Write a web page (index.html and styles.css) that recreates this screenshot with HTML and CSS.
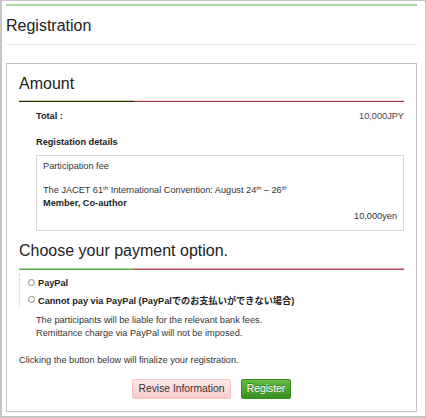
FILE: index.html
```html
<!DOCTYPE html>
<html lang="en">
<head>
<meta charset="utf-8">
<title>Registration</title>
<link rel="stylesheet" href="styles.css">
</head>
<body>
<div class="page">
  <div class="topbar"></div>
  <h1 class="page-title">Registration</h1>
  <section class="panel">
    <h2 class="sec-title">Amount</h2>
    <div class="rule rule-dark"><span class="rule-left"></span></div>
    <div class="total-row"><b>Total :</b><span class="total-val">10,000JPY</span></div>
    <div class="details-title">Registation details</div>
    <div class="details-box">
      <p class="d-line">Participation fee</p>
      <p class="d-line d-gap">The JACET 61<sup>th</sup> International Convention: August 24<sup>th</sup> – 26<sup>th</sup></p>
      <p class="d-line"><b>Member, Co-author</b></p>
      <p class="d-line d-price">10,000yen</p>
    </div>
    <h2 class="sec-title pay-title">Choose your payment option.</h2>
    <div class="rule rule-green"><span class="rule-left"></span></div>
    <div class="options">
      <label class="opt"><span class="radio"></span><b>PayPal</b></label>
      <label class="opt"><span class="radio"></span><b>Cannot pay via PayPal (PayPalでのお支払いができない場合)</b></label>
    </div>
    <p class="note">The participants will be liable for the relevant bank fees.<br>Remittance charge via PayPal will not be imposed.</p>
    <p class="final">Clicking the button below will finalize your registration.</p>
    <div class="buttons">
      <button class="btn btn-revise" type="button">Revise Information</button>
      <button class="btn btn-register" type="button">Register</button>
    </div>
  </section>
</div>
</body>
</html>
```

FILE: styles.css
```css
html, body {
  margin: 0;
  padding: 0;
  background: #ffffff;
}
body {
  font-family: "Liberation Sans", Arial, "Noto Sans CJK JP", sans-serif;
  color: #333333;
}
.page {
  box-sizing: border-box;
  width: 426px;
  height: 418px;
  border-style: solid;
  border-color: #c6c6c6;
  border-width: 1px 1px 2px 2px;
  padding: 3px 8px 0 4px;
  overflow: hidden;
}
.topbar {
  height: 2px;
  background: #a9d9a1;
}
.page-title {
  margin: 10px 0 0;
  padding-bottom: 8px;
  border-bottom: 1px solid #e6e6e6;
  font-size: 16px;
  line-height: 20px;
  font-weight: normal;
  color: #222222;
}
.panel {
  margin-top: 18px;
  border: 1px solid #c4c4c4;
  padding: 10px 12px 12px;
}
.sec-title {
  margin: 0;
  font-size: 16px;
  line-height: 20px;
  font-weight: normal;
  color: #222222;
}
.rule {
  height: 2px;
  margin-top: 6px;
}
.rule-dark {
  background: linear-gradient(to bottom, #ecd0d4 0 50%, #a43a48 50% 100%);
}
.rule-dark .rule-left {
  display: block;
  width: 115px;
  height: 2px;
  background: linear-gradient(to bottom, #b5dcaa 0 50%, #3b1d0c 50% 100%);
}
.rule-green {
  margin-top: 7px;
  background: linear-gradient(to bottom, #d6a0a7 0 50%, #b4505d 50% 100%);
}
.rule-green .rule-left {
  display: block;
  width: 115px;
  height: 2px;
  background: linear-gradient(to bottom, #a2d596 0 50%, #5cb54a 50% 100%);
}
.total-row {
  display: flex;
  justify-content: space-between;
  margin-top: 8px;
  padding-left: 17px;
  font-size: 9.2px;
  line-height: 13px;
}
.total-row b {
  color: #222222;
}
.total-val {
  color: #444444;
}
.details-title {
  margin-top: 13px;
  padding-left: 17px;
  font-size: 9.2px;
  line-height: 13px;
  font-weight: bold;
  color: #222222;
}
.details-box {
  margin: 6px 0 0 17px;
  border: 1px solid #dadada;
  padding: 4px 6px 7px;
  font-size: 9.2px;
  line-height: 13px;
}
.d-line {
  margin: 0;
}
.d-gap {
  margin-top: 11px;
}
.d-line b {
  color: #222222;
}
.d-price {
  text-align: right;
}
sup {
  font-size: 6px;
  line-height: 0;
  vertical-align: 3px;
}
.pay-title {
  margin-top: 10px;
}
.options {
  margin-top: 4px;
  border-left: 1px dotted #cfcfcf;
  padding-left: 8px;
}
.opt {
  display: flex;
  align-items: center;
  height: 17px;
  font-size: 9.2px;
  color: #222222;
}
.radio {
  box-sizing: border-box;
  width: 7px;
  height: 7px;
  margin-right: 3px;
  border: 1px solid #8c8c8c;
  border-radius: 50%;
  background: radial-gradient(circle, #ffffff 40%, #ececec 100%);
  flex: none;
}
.note {
  margin: 6px 0 0;
  padding-left: 17px;
  font-size: 9.2px;
  line-height: 13px;
}
.final {
  margin: 14px 0 0;
  font-size: 9.2px;
  line-height: 13px;
}
.buttons {
  display: flex;
  justify-content: center;
  gap: 10px;
  margin-top: 12px;
}
.btn {
  box-sizing: border-box;
  height: 20px;
  padding: 0;
  border-radius: 2px;
  font-family: "Liberation Sans", Arial, sans-serif;
  font-size: 10.3px;
  line-height: 18px;
  white-space: nowrap;
  text-align: center;
  cursor: pointer;
}
.btn-revise {
  width: 99px;
  border: 1px solid #f4c3c3;
  background: linear-gradient(to bottom, #ffe9e9, #fbcaca);
  color: #333333;
}
.btn-register {
  width: 50px;
  border: 1px solid #3c8a24;
  background: linear-gradient(to bottom, #62bc44, #3a8e21);
  color: #ffffff;
  text-shadow: 0 -1px 0 rgba(0, 0, 0, 0.35);
}
```
